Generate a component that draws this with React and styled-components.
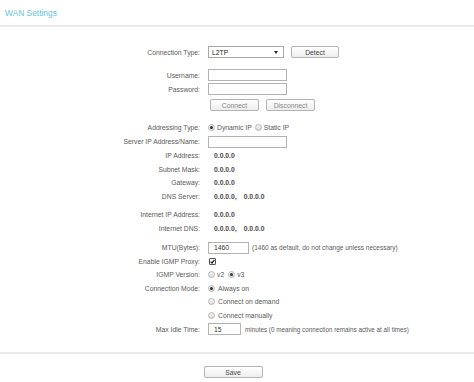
import React from "react";
import styled, { createGlobalStyle } from "styled-components";

const Global = createGlobalStyle`
  html, body { margin: 0; padding: 0; background: #fff; }
  body { font-family: "Liberation Sans", Arial, sans-serif; font-size: 6.8px; color: #555; }
  * { box-sizing: border-box; }
`;

const Page = styled.div`
  width: 474px;
  height: 382px;
  overflow: hidden;
  background: #fff;
`;

const Header = styled.div`
  height: 27px;
  border-bottom: 2px solid #ebebeb;
  display: flex;
  align-items: center;
  padding: 0 0 0 5px;
`;

const Title = styled.h1`
  margin: 0;
  font-size: 8.4px;
  font-weight: normal;
  color: #62c6dc;
`;

const Form = styled.div`
  display: flex;
  flex-direction: column;
  padding-top: 18px;
`;

const Row = styled.div`
  display: grid;
  grid-template-columns: 200px 1fr;
  column-gap: 8px;
  align-items: center;
  height: ${(p) => p.$h || 13.5}px;
  margin-top: ${(p) => p.$mt || 0}px;
`;

const Label = styled.div`
  text-align: right;
  color: #5a5a5a;
  white-space: nowrap;
`;

const Field = styled.div`
  display: flex;
  align-items: center;
  gap: ${(p) => p.$gap ?? 4}px;
  white-space: nowrap;
`;

const Value = styled.span`
  font-weight: bold;
  color: #4a4a4a;
  padding-left: ${(p) => p.$pl ?? 6}px;
`;

const TextInput = styled.div`
  width: ${(p) => p.$w}px;
  height: 12px;
  border: 1px solid #b3b3b3;
  background: #fff;
  padding-left: 5px;
  display: flex;
  align-items: center;
  color: #333;
`;

const Select = styled.div`
  width: 76px;
  height: 12px;
  border: 1px solid #a8a8a8;
  background: #fff;
  display: flex;
  align-items: center;
  justify-content: space-between;
  padding: 0 5px 0 3px;
  color: #222;
`;

const Button = styled.div`
  width: ${(p) => p.$w}px;
  height: ${(p) => p.$h || 12}px;
  border: 1px solid #b4b4b4;
  border-radius: 2px;
  background: linear-gradient(#ffffff, #ededed);
  display: flex;
  align-items: center;
  justify-content: center;
  color: ${(p) => (p.$dim ? "#888" : "#444")};
  margin-left: ${(p) => p.$ml || 0}px;
`;

const Note = styled.span`
  color: #5a5a5a;
  font-size: ${(p) => p.$fs || 6.6}px;
`;

const RadioWrap = styled.span`
  display: inline-flex;
  align-items: center;
  gap: ${(p) => p.$gap ?? 2}px;
  margin-right: ${(p) => p.$mr || 0}px;
  color: #5a5a5a;
`;

const Circle = styled.span`
  width: 7px;
  height: 7px;
  border-radius: 50%;
  border: 1px solid #b8b8b8;
  background: linear-gradient(#f4f4f4, #dcdcdc);
  display: inline-flex;
  align-items: center;
  justify-content: center;
  &::after {
    content: "";
    width: 3px;
    height: 3px;
    border-radius: 50%;
    background: ${(p) => (p.$on ? "#333" : "transparent")};
  }
`;

const Radio = ({ on, children, gap, mr }) => (
  <RadioWrap $gap={gap} $mr={mr}>
    <Circle $on={on} />
    {children}
  </RadioWrap>
);

const CheckBox = styled.span`
  width: 7px;
  height: 7px;
  border: 1px solid #555;
  border-radius: 1px;
  background: #fff;
  display: inline-flex;
  align-items: center;
  justify-content: center;
  margin-left: 1px;
`;

const Divider = styled.div`
  height: 2px;
  background: #ebebeb;
  margin-top: 16px;
`;

const Footer = styled.div`
  display: flex;
  justify-content: center;
  padding-top: 12px;
  padding-right: 8px;
`;

export default function App() {
  return (
    <Page>
      <Global />
      <Header>
        <Title>WAN Settings</Title>
      </Header>
      <Form>
        <Row $h={14}>
          <Label>Connection Type:</Label>
          <Field $gap={7}>
            <Select>
              <span>L2TP</span>
              <svg width="4" height="3" viewBox="0 0 4 3">
                <path d="M0 0 H4 L2 3 Z" fill="#222" />
              </svg>
            </Select>
            <Button $w={48}>Detect</Button>
          </Field>
        </Row>
        <Row $h={14} $mt={9}>
          <Label>Username:</Label>
          <Field>
            <TextInput $w={79} />
          </Field>
        </Row>
        <Row $h={14}>
          <Label>Password:</Label>
          <Field>
            <TextInput $w={79} />
          </Field>
        </Row>
        <Row $h={14} $mt={2}>
          <Label />
          <Field $gap={7}>
            <Button $w={49} $ml={2} $dim>Connect</Button>
            <Button $w={49} $dim>Disconnect</Button>
          </Field>
        </Row>
        <Row $mt={9}>
          <Label>Addressing Type:</Label>
          <Field $gap={0}>
            <Radio on mr={3}>Dynamic IP</Radio>
            <Radio>Static IP</Radio>
          </Field>
        </Row>
        <Row $h={14.5}>
          <Label>Server IP Address/Name:</Label>
          <Field>
            <TextInput $w={79} />
          </Field>
        </Row>
        <Row>
          <Label>IP Address:</Label>
          <Field><Value>0.0.0.0</Value></Field>
        </Row>
        <Row>
          <Label>Subnet Mask:</Label>
          <Field><Value>0.0.0.0</Value></Field>
        </Row>
        <Row>
          <Label>Gateway:</Label>
          <Field><Value>0.0.0.0</Value></Field>
        </Row>
        <Row>
          <Label>DNS Server:</Label>
          <Field $gap={0}>
            <Value>0.0.0.0,</Value>
            <Value $pl={7}>0.0.0.0</Value>
          </Field>
        </Row>
        <Row $mt={5}>
          <Label>Internet IP Address:</Label>
          <Field><Value>0.0.0.0</Value></Field>
        </Row>
        <Row>
          <Label>Internet DNS:</Label>
          <Field $gap={0}>
            <Value>0.0.0.0,</Value>
            <Value $pl={7}>0.0.0.0</Value>
          </Field>
        </Row>
        <Row $h={14} $mt={5.5}>
          <Label>MTU(Bytes):</Label>
          <Field $gap={3}>
            <TextInput $w={41}>1460</TextInput>
            <Note $fs={6.5}>(1460 as default, do not change unless necessary)</Note>
          </Field>
        </Row>
        <Row>
          <Label>Enable IGMP Proxy:</Label>
          <Field>
            <CheckBox>
              <svg width="5" height="5" viewBox="0 0 5 5">
                <path d="M0.6 2.6 L2 4 L4.5 0.8" stroke="#222" strokeWidth="1.3" fill="none" />
              </svg>
            </CheckBox>
          </Field>
        </Row>
        <Row>
          <Label>IGMP Version:</Label>
          <Field $gap={0}>
            <Radio mr={4}>v2</Radio>
            <Radio on>v3</Radio>
          </Field>
        </Row>
        <Row>
          <Label>Connection Mode:</Label>
          <Field><Radio on gap={3}>Always on</Radio></Field>
        </Row>
        <Row>
          <Label />
          <Field><Radio gap={3}>Connect on demand</Radio></Field>
        </Row>
        <Row>
          <Label />
          <Field><Radio gap={3}>Connect manually</Radio></Field>
        </Row>
        <Row $h={14}>
          <Label>Max Idle Time:</Label>
          <Field $gap={4}>
            <TextInput $w={33}>15</TextInput>
            <Note $fs={6.3}>minutes (0 meaning connection remains active at all times)</Note>
          </Field>
        </Row>
      </Form>
      <Divider />
      <Footer>
        <Button $w={59} $h={12}>Save</Button>
      </Footer>
    </Page>
  );
}
